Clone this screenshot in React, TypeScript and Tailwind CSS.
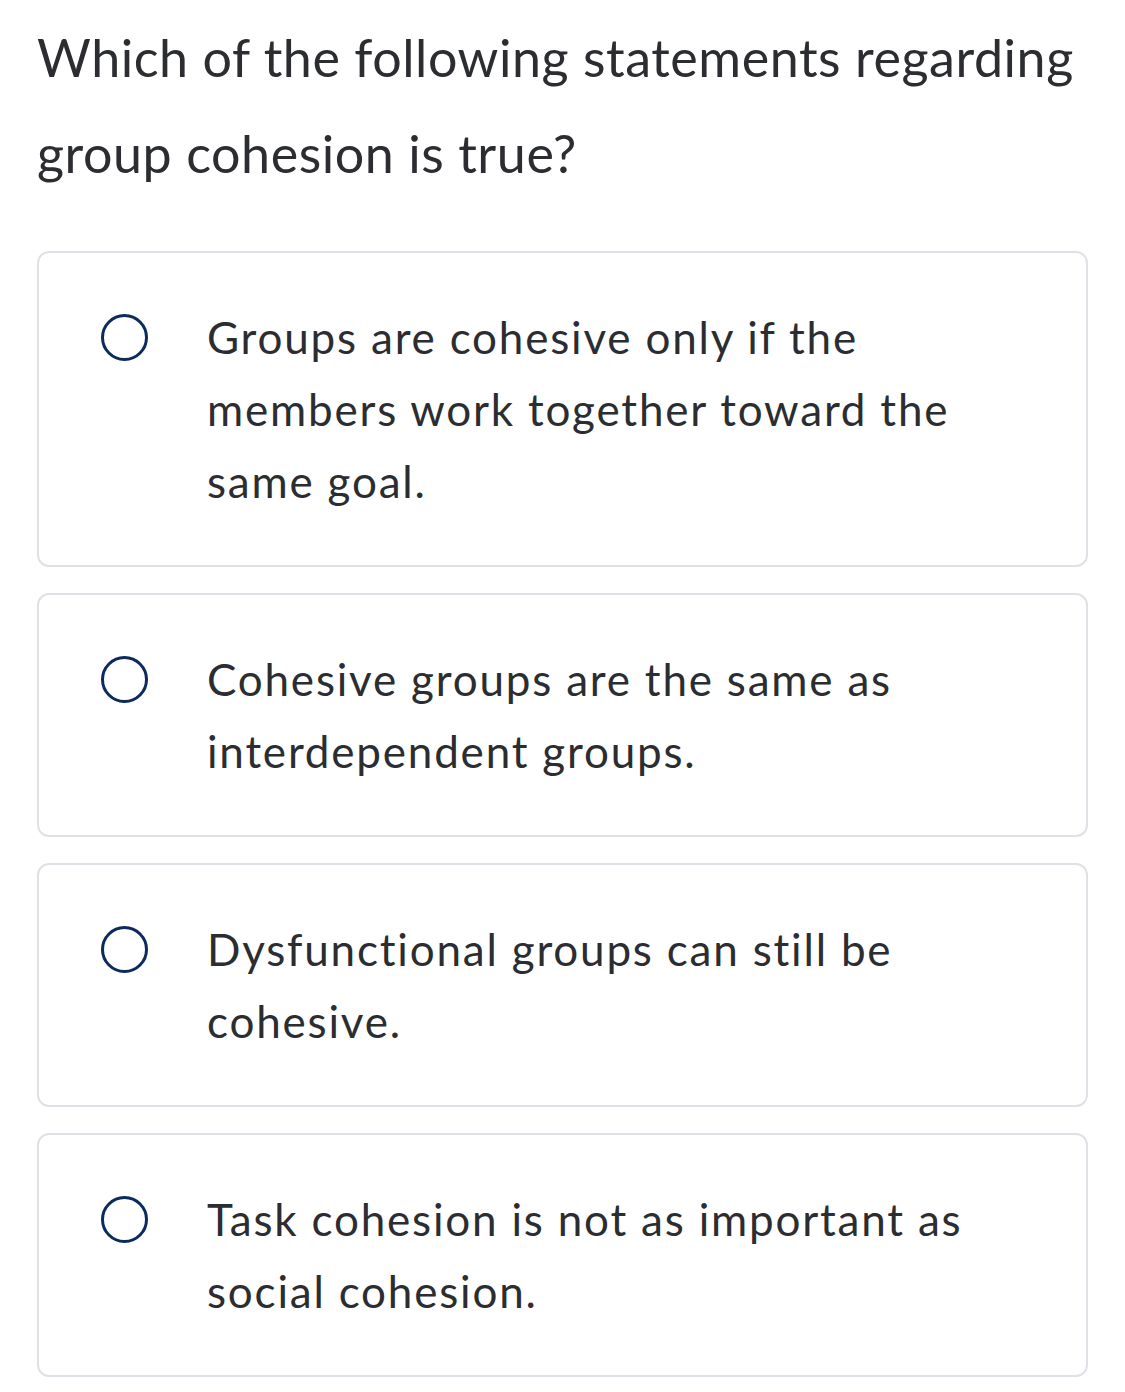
const options = [
  "Groups are cohesive only if the members work together toward the same goal.",
  "Cohesive groups are the same as interdependent groups.",
  "Dysfunctional groups can still be cohesive.",
  "Task cohesion is not as important as social cohesion.",
];

function Radio() {
  return (
    <span className="mt-[12px] flex h-[48px] w-[48px] shrink-0 items-center justify-center">
      <span className="block h-[47px] w-[47px] rounded-full border-[3px] border-[#0b2a5e]" />
    </span>
  );
}

export default function App() {
  return (
    <div
      className="min-h-screen bg-white px-[37px] pt-[9px] text-[#2b2d31]"
      style={{ fontFamily: "Lato, 'Open Sans', sans-serif" }}
    >
      {/* Question */}
      <h1 className="text-[52px] font-normal leading-[96px] tracking-[0.55px]">
        Which of the following statements regarding group cohesion is true?
      </h1>

      {/* Options */}
      <div className="mt-[50px] flex flex-col gap-[26px]">
        {options.map((text, i) => (
          <label
            key={i}
            className="flex items-start rounded-[12px] border-2 border-[#dfe1e6] py-[48px] pl-[61px] pr-[60px]"
          >
            <Radio />
            <span className="ml-[59px] max-w-[780px] text-[44px] leading-[72px] tracking-[1.8px]">
              {text}
            </span>
          </label>
        ))}
      </div>
    </div>
  );
}
